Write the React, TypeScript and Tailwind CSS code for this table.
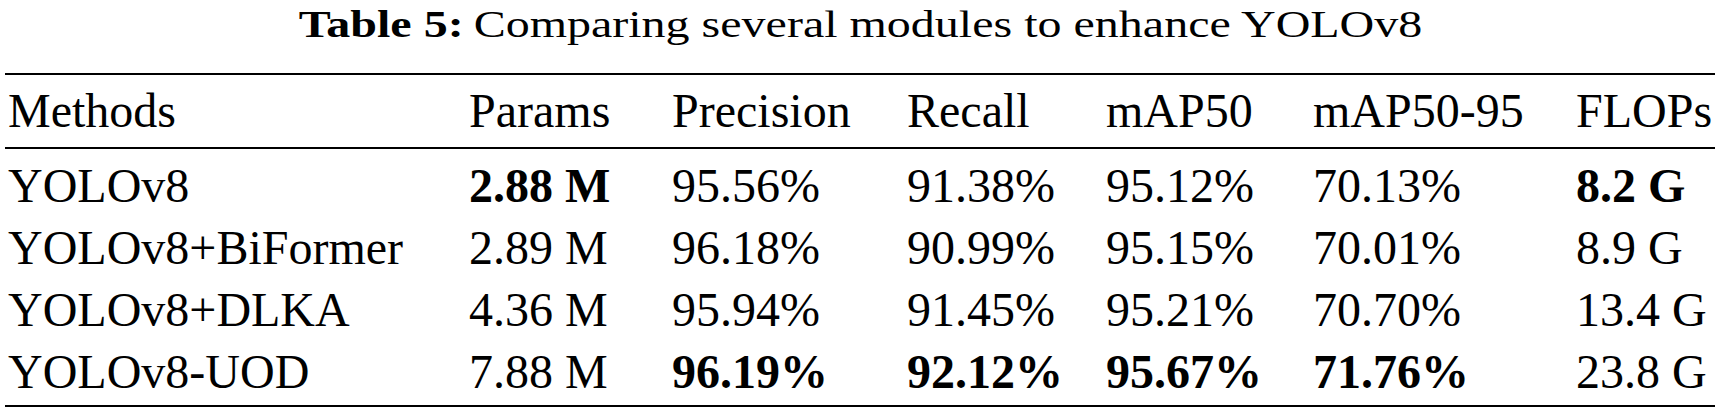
const rows = [
  { name: 'YOLOv8', params: '2.88 M', p: '95.56%', r: '91.38%', m50: '95.12%', m95: '70.13%', flops: '8.2 G', bold: ['params', 'flops'] },
  { name: 'YOLOv8+BiFormer', params: '2.89 M', p: '96.18%', r: '90.99%', m50: '95.15%', m95: '70.01%', flops: '8.9 G', bold: [] },
  { name: 'YOLOv8+DLKA', params: '4.36 M', p: '95.94%', r: '91.45%', m50: '95.21%', m95: '70.70%', flops: '13.4 G', bold: [] },
  { name: 'YOLOv8-UOD', params: '7.88 M', p: '96.19%', r: '92.12%', m50: '95.67%', m95: '71.76%', flops: '23.8 G', bold: ['p', 'r', 'm50', 'm95'] },
];

const keys = ['params', 'p', 'r', 'm50', 'm95', 'flops'] as const;

// column starts: 8, 469, 672, 907, 1106, 1313, 1576
const grid = 'grid grid-cols-[461px_203px_235px_199px_207px_263px_1fr] pl-[3px]';

export default function App() {
  return (
    <div className="w-[1721px] h-[412px] bg-white text-black font-['Liberation_Serif','Times_New_Roman',serif]">
      <div className="h-[48px] text-[48px] leading-[48px] text-center scale-y-80 whitespace-nowrap">
        <span className="font-bold">Table 5:</span>
        <span className="inline-block w-[10px]" />
        <span>Comparing several modules to enhance YOLOv8</span>
      </div>

      <div className="mt-[25px] ml-[5px] mr-[6px]">
        <div className="h-[2px] bg-black" />
        <div className={`${grid} h-[72px] items-center text-[48px] leading-[72px]`}>
          <div>Methods</div>
          <div>Params</div>
          <div>Precision</div>
          <div>Recall</div>
          <div>mAP50</div>
          <div>mAP50-95</div>
          <div>FLOPs</div>
        </div>
        <div className="h-[2px] bg-black" />

        <div className="pt-[6px] pb-[2px]">
          {rows.map((row) => (
            <div key={row.name} className={`${grid} h-[62px] text-[48px] leading-[62px] whitespace-nowrap`}>
              <div>{row.name}</div>
              {keys.map((k) => (
                <div key={k} className={row.bold.includes(k) ? 'font-bold' : ''}>
                  {row[k]}
                </div>
              ))}
            </div>
          ))}
        </div>
        <div className="h-[2px] bg-black" />
      </div>
    </div>
  );
}
